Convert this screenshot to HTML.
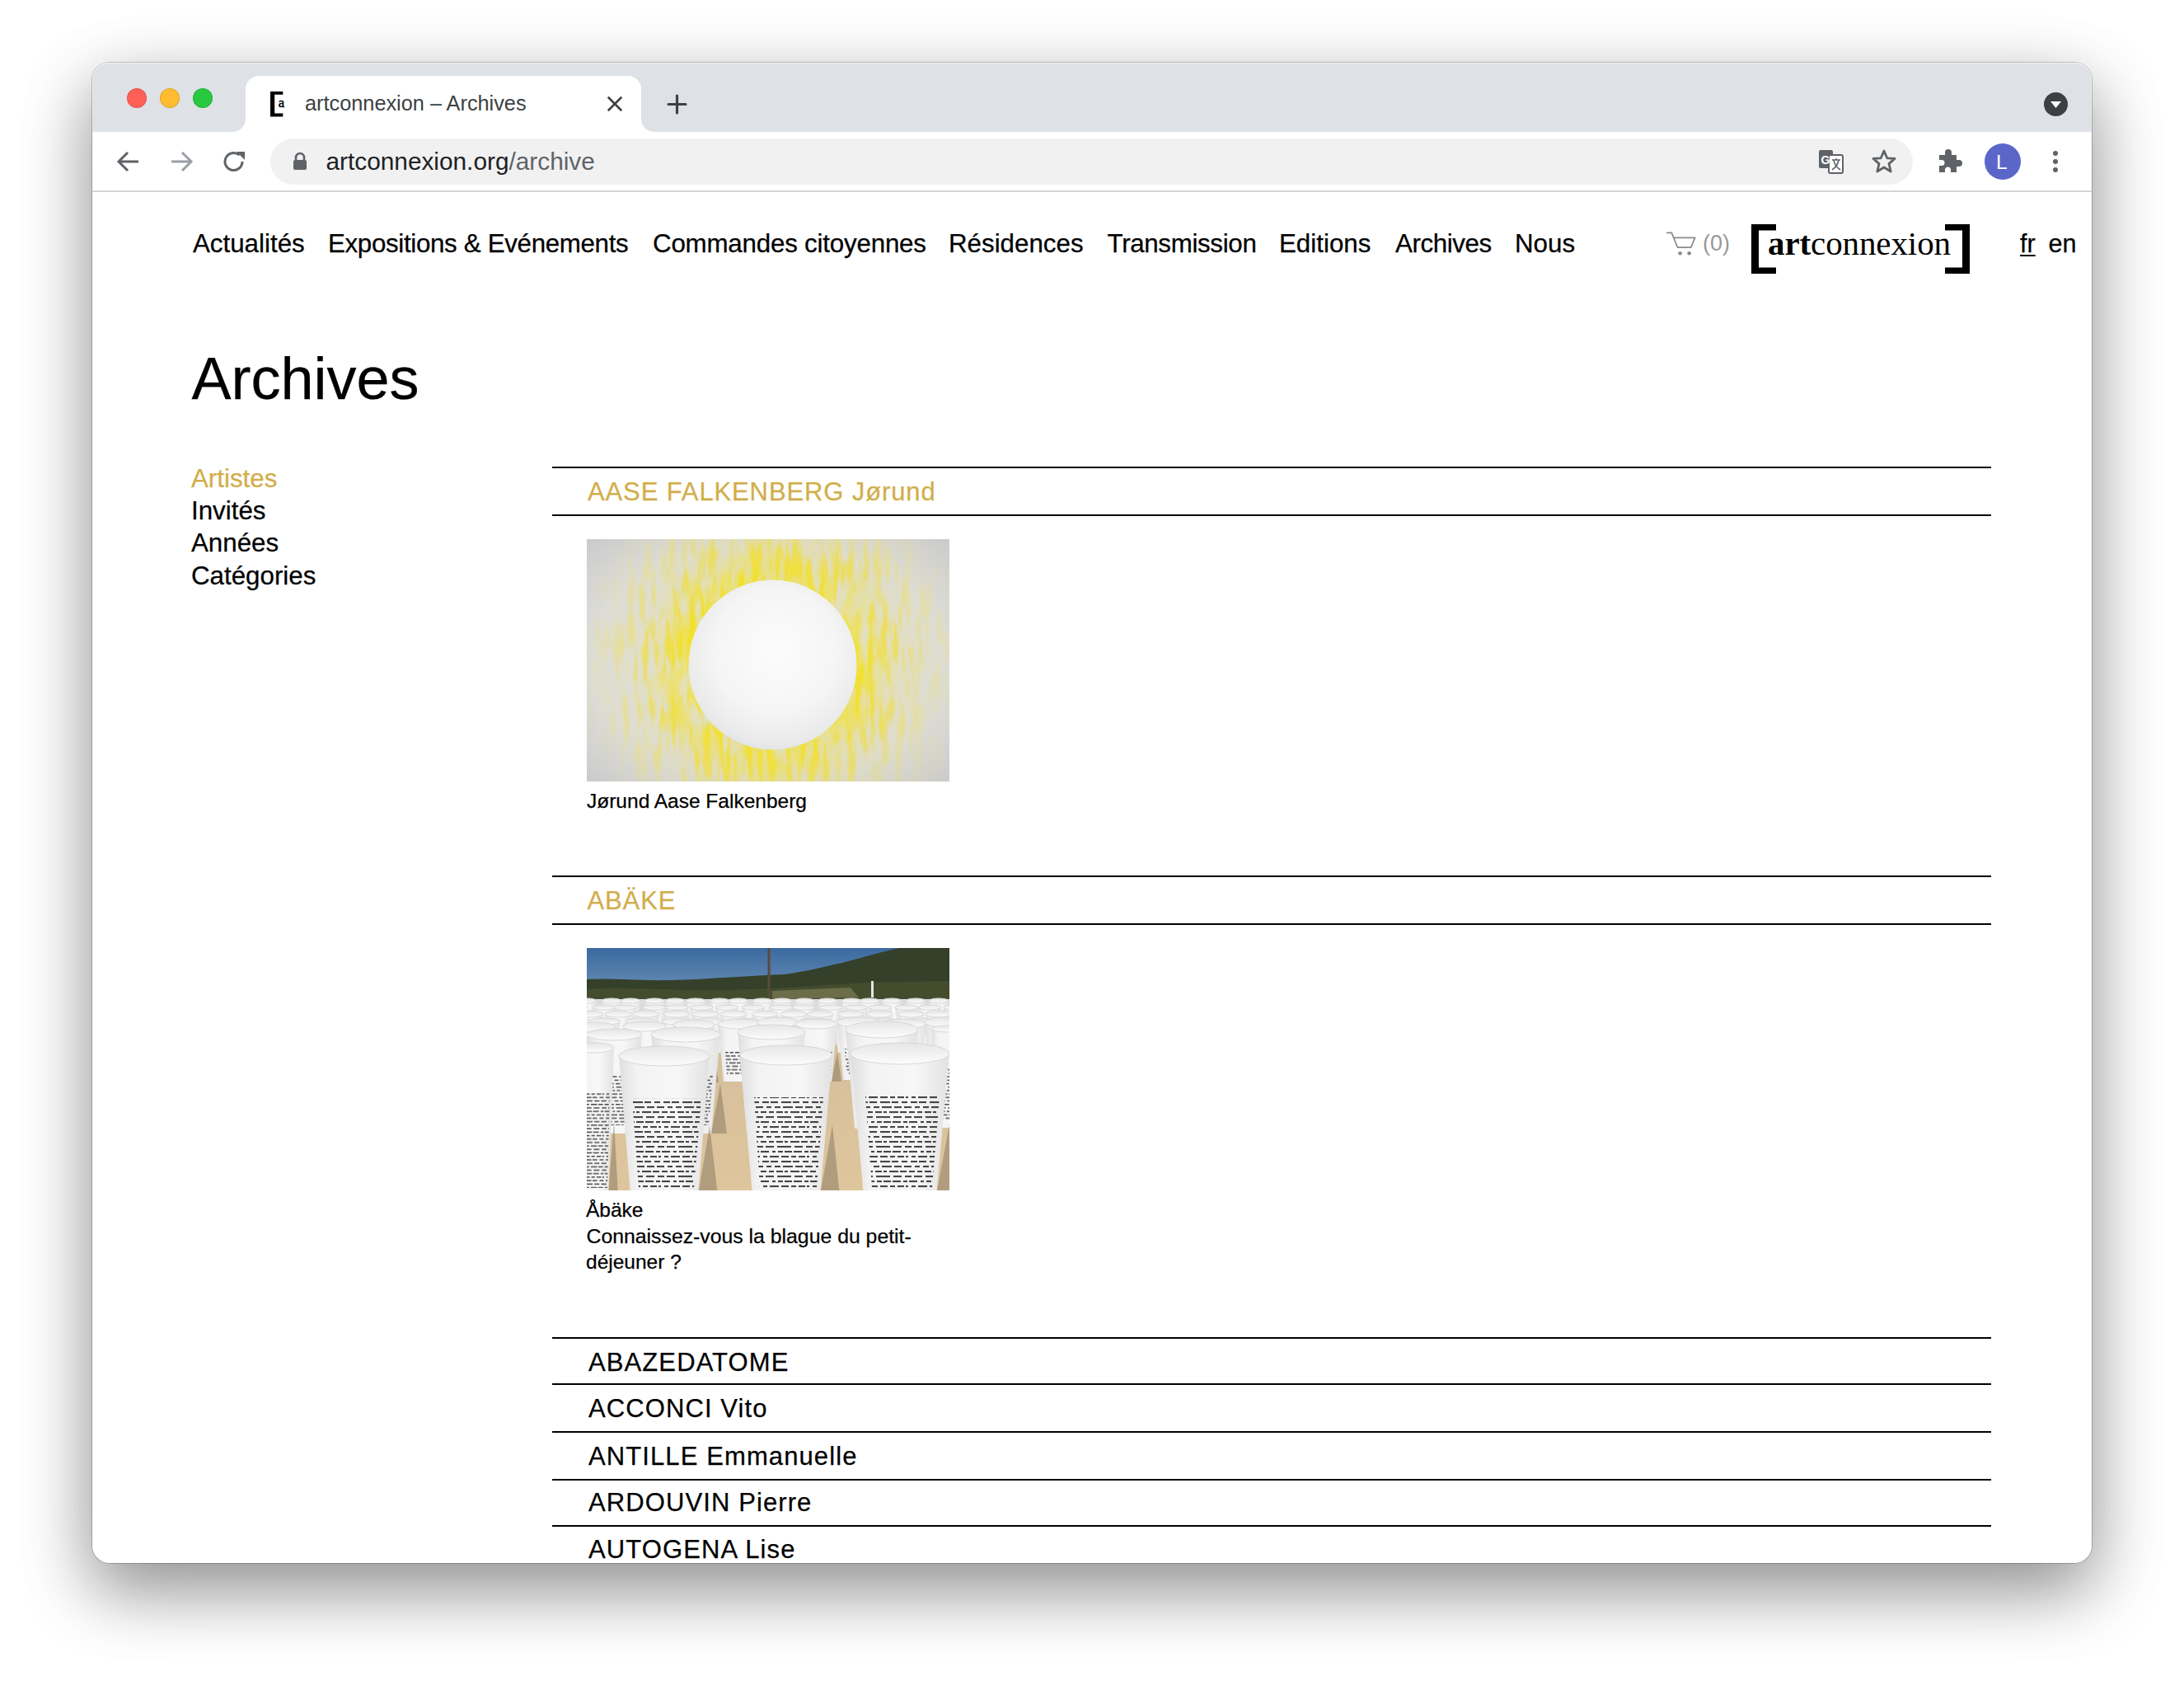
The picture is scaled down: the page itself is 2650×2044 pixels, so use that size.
<!DOCTYPE html>
<html><head><meta charset="utf-8">
<style>
html,body{margin:0;padding:0;background:#fff;}
body{width:2650px;height:2044px;position:relative;overflow:hidden;font-family:"Liberation Sans",sans-serif;}
#win{position:absolute;left:112px;top:76px;width:2426px;height:1820px;border-radius:21px;background:#fff;
 box-shadow:0 0 0 1px rgba(0,0,0,0.2), 0 32px 80px 0px rgba(0,0,0,0.35), 0 30px 100px 0px rgba(0,0,0,0.14);}
#clip{position:absolute;left:112px;top:76px;width:2426px;height:1820px;border-radius:21px;overflow:hidden;}
#strip{position:absolute;left:0;top:0;width:2426px;height:84px;background:#dee1e6;}
.dot{position:absolute;width:24px;height:24px;border-radius:50%;}
.t{position:absolute;white-space:nowrap;line-height:1;-webkit-text-stroke:0.25px currentColor;}
.hl{position:absolute;left:670px;width:1746px;height:2px;background:#000;}
.cap{font-size:24.5px;color:#000;}
.list{font-size:31px;letter-spacing:1.1px;color:#000;}
.nav{font-size:31.3px;color:#000;}
.gold{color:#d1ae4a !important;}
</style></head><body>
<div id="win"></div>
<div id="clip">
  <div id="strip"></div>
</div>
<!-- traffic lights -->
<div class="dot" style="left:154px;top:107px;background:#fe5f57;box-shadow:inset 0 0 0 1px rgba(0,0,0,0.12)"></div>
<div class="dot" style="left:194px;top:107px;background:#febc2e;box-shadow:inset 0 0 0 1px rgba(0,0,0,0.12)"></div>
<div class="dot" style="left:234px;top:107px;background:#28c840;box-shadow:inset 0 0 0 1px rgba(0,0,0,0.12)"></div>
<!-- tab -->
<div style="position:absolute;left:298px;top:92px;width:480px;height:70px;background:#fff;border-radius:16px 16px 0 0;"></div>
<div style="position:absolute;left:282px;top:144px;width:16px;height:16px;background:radial-gradient(circle at 0 0, #dee1e6 15.5px, #fff 16.5px);"></div>
<div style="position:absolute;left:778px;top:144px;width:16px;height:16px;background:radial-gradient(circle at 100% 0, #dee1e6 15.5px, #fff 16.5px);"></div>
<!-- favicon -->
<svg style="position:absolute;left:326px;top:109px" width="24" height="36" viewBox="0 0 24 36">
 <path d="M2 2 H17.3 V5.8 H7.2 V28.6 H17.3 V32.4 H2 Z" fill="#000"/>
 <text x="11.8" y="21.4" font-family="Liberation Serif" font-size="16.5" fill="#000" stroke="#000" stroke-width="0.5">a</text>
</svg>
<div class="t" style="left:370px;top:112.6px;font-size:25.3px;color:#3c4043;-webkit-text-stroke:0;">artconnexion – Archives</div>
<!-- close X -->
<svg style="position:absolute;left:734px;top:114px" width="24" height="24" viewBox="0 0 24 24"><path d="M4.5 4.5 L19.5 19.5 M19.5 4.5 L4.5 19.5" stroke="#3c4043" stroke-width="2.6" stroke-linecap="round"/></svg>
<!-- plus -->
<svg style="position:absolute;left:808px;top:113px" width="27" height="27" viewBox="0 0 27 27"><path d="M13.5 3 V24 M3 13.5 H24" stroke="#3c4043" stroke-width="3.2" stroke-linecap="round"/></svg>
<!-- dropdown circle -->
<div style="position:absolute;left:2480px;top:112px;width:29px;height:29px;border-radius:50%;background:#3c4043;"></div>
<svg style="position:absolute;left:2480px;top:112px" width="29" height="29" viewBox="0 0 29 29"><path d="M8 11 H21 L14.5 19 Z" fill="#fff"/></svg>
<!-- toolbar separator -->
<div style="position:absolute;left:112px;top:231px;width:2426px;height:2px;background:#d5d5d5;"></div>
<!-- nav icons -->
<svg style="position:absolute;left:140px;top:180px" width="32" height="32" viewBox="0 0 32 32"><path d="M28 16 H5 M15 5 L4 16 L15 27" stroke="#5f6368" stroke-width="3" fill="none"/></svg>
<svg style="position:absolute;left:204px;top:180px" width="32" height="32" viewBox="0 0 32 32"><path d="M4 16 H27 M17 5 L28 16 L17 27" stroke="#9aa0a6" stroke-width="3" fill="none"/></svg>
<svg style="position:absolute;left:268px;top:180px" width="32" height="32" viewBox="0 0 32 32"><path d="M26 16 A10.5 10.5 0 1 1 22.5 8.2" stroke="#5f6368" stroke-width="3" fill="none"/><path d="M19 4 L29 4 L29 14 Z" fill="#5f6368"/></svg>
<!-- omnibox -->
<div style="position:absolute;left:328px;top:168px;width:1993px;height:56px;border-radius:28px;background:#f1f1f1;"></div>
<svg style="position:absolute;left:354px;top:184px" width="20" height="24" viewBox="0 0 20 24"><path d="M5 10 V7 A5 5 0 0 1 15 7 V10" stroke="#5f6368" stroke-width="2.6" fill="none"/><rect x="2" y="10" width="16" height="12" rx="2" fill="#5f6368"/></svg>
<div class="t" style="left:395.5px;top:180.6px;font-size:29.8px;color:#202124;-webkit-text-stroke:0;">artconnexion.org<span style="color:#5f6368">/archive</span></div>
<!-- translate icon -->
<svg style="position:absolute;left:2206px;top:181px" width="32" height="32" viewBox="0 0 32 32"><rect x="1" y="1" width="17" height="22" rx="2" fill="#5f6368"/><rect x="13" y="7" width="17" height="22" rx="2" fill="#fff" stroke="#5f6368" stroke-width="2"/><text x="3.5" y="18" font-family="Liberation Sans" font-weight="bold" font-size="14" fill="#fff">G</text><path d="M17 13 H27 M22 11 V13 M19 13 C20 20 24 23 27 25 M25 13 C24 19 20 23 17 25" stroke="#5f6368" stroke-width="1.6" fill="none"/></svg>
<!-- star -->
<svg style="position:absolute;left:2270px;top:180px" width="32" height="32" viewBox="0 0 32 32"><path d="M16 3 L19.8 11.8 L29 12.4 L22 18.6 L24.2 28 L16 23 L7.8 28 L10 18.6 L3 12.4 L12.2 11.8 Z" stroke="#5f6368" stroke-width="2.8" fill="none" stroke-linejoin="round"/></svg>
<!-- puzzle -->
<svg style="position:absolute;left:2351px;top:180px" width="32" height="32" viewBox="0 0 32 32"><path d="M2 8 H9 V5 A4 4 0 0 1 17 5 V8 H23 V14 H26 A4 4 0 0 1 26 22 H23 V29 H16 V26 A3.5 3.5 0 0 0 9 26 V29 H2 V21 H5 A3.5 3.5 0 0 0 5 14 H2 Z" fill="#5f6368"/></svg>
<!-- avatar -->
<div style="position:absolute;left:2408px;top:174px;width:44px;height:44px;border-radius:50%;background:#5a67c9;"></div>
<div class="t" style="left:2422px;top:184.5px;font-size:24.5px;color:#fff;-webkit-text-stroke:0;">L</div>
<!-- kebab -->
<div style="position:absolute;left:2491px;top:183px;width:6px;height:6px;border-radius:50%;background:#5f6368;"></div>
<div style="position:absolute;left:2491px;top:193px;width:6px;height:6px;border-radius:50%;background:#5f6368;"></div>
<div style="position:absolute;left:2491px;top:203px;width:6px;height:6px;border-radius:50%;background:#5f6368;"></div>

<!-- PAGE CONTENT -->

<!-- site nav -->
<div class="t nav" style="left:234px;top:280px;">Actualités</div>
<div class="t nav" style="left:398px;top:280px;letter-spacing:-0.33px;">Expositions &amp; Evénements</div>
<div class="t nav" style="left:792px;top:280px;letter-spacing:-0.2px;">Commandes citoyennes</div>
<div class="t nav" style="left:1151px;top:280px;">Résidences</div>
<div class="t nav" style="left:1343.5px;top:280px;letter-spacing:-0.33px;">Transmission</div>
<div class="t nav" style="left:1552px;top:280px;">Editions</div>
<div class="t nav" style="left:1693px;top:280px;letter-spacing:-0.4px;">Archives</div>
<div class="t nav" style="left:1838px;top:280px;">Nous</div>
<!-- cart -->
<svg style="position:absolute;left:2021px;top:279px" width="40" height="34" viewBox="0 0 40 34"><path d="M1.8 3.4 H7.3 L14.6 21.2 H30.7 L35.7 9.3 H10.5" stroke="#8a8a8a" stroke-width="1.7" fill="none" stroke-linejoin="round" stroke-linecap="round"/><circle cx="17.6" cy="28.3" r="2.3" fill="#8a8a8a"/><circle cx="28.6" cy="28.3" r="2.3" fill="#8a8a8a"/></svg>
<div class="t" style="left:2066px;top:282px;font-size:27px;color:#999;-webkit-text-stroke:0;">(0)</div>
<!-- logo -->
<svg style="position:absolute;left:2124px;top:271px" width="268" height="62" viewBox="0 0 268 62"><path d="M1 1 H31 V8.5 H10 V53.5 H31 V61 H1 Z" fill="#000"/><path d="M266 1 H236 V8.5 H257 V53.5 H236 V61 H266 Z" fill="#000"/></svg>
<div class="t" style="left:2145px;top:275px;font-family:'Liberation Serif';font-size:41px;color:#000;letter-spacing:-0.1px;-webkit-text-stroke:0;"><b>art</b>connexion</div>
<div class="t" style="left:2451px;top:280.1px;font-size:30.5px;color:#000;text-decoration:underline;text-underline-offset:2.5px;text-decoration-thickness:2px;">fr</div>
<div class="t" style="left:2485.5px;top:280.1px;font-size:30.5px;color:#000;">en</div>
<!-- title -->
<div class="t" style="left:232.5px;top:423px;font-size:72px;color:#000;">Archives</div>
<!-- sidebar -->
<div class="t nav gold" style="left:232px;top:564.5px;">Artistes</div>
<div class="t nav" style="left:232px;top:604.1px;">Invités</div>
<div class="t nav" style="left:232px;top:642.5px;">Années</div>
<div class="t nav" style="left:232px;top:682.5px;">Catégories</div>
<!-- section 1 -->
<div class="hl" style="top:566px"></div>
<div class="t list gold" style="left:713px;top:580.8px;letter-spacing:0.88px;">AASE FALKENBERG Jørund</div>
<div class="hl" style="top:624px"></div>
<div id="img1" style="position:absolute;left:712px;top:654px;width:440px;height:294px;overflow:hidden;"><svg width="440" height="294" viewBox="0 0 440 294" style="display:block">
<defs>
 <radialGradient id="bg1" cx="0.5" cy="0.5" r="0.7">
  <stop offset="0" stop-color="#e6e6e6"/><stop offset="0.7" stop-color="#dcdcdb"/><stop offset="1" stop-color="#cbcbcb"/>
 </radialGradient>
 <radialGradient id="halo" cx="225.5" cy="152.6" r="250" gradientUnits="userSpaceOnUse">
  <stop offset="0.38" stop-color="#f2e02a" stop-opacity="1"/>
  <stop offset="0.6" stop-color="#efdd40" stop-opacity="0.7"/>
  <stop offset="0.85" stop-color="#ece070" stop-opacity="0.22"/>
  <stop offset="1" stop-color="#e8dc80" stop-opacity="0"/>
 </radialGradient>
 <filter id="streak" x="0" y="0" width="100%" height="100%">
  <feTurbulence type="fractalNoise" baseFrequency="0.12 0.02" numOctaves="3" seed="11" result="n"/>
  <feColorMatrix in="n" type="matrix" values="0 0 0 0 0  0 0 0 0 0  0 0 0 0 0  0 0 0 4 -1.75" result="a"/>
  <feComposite in="SourceGraphic" in2="a" operator="in"/>
 </filter>
 <radialGradient id="halo2" cx="225.5" cy="152.6" r="160" gradientUnits="userSpaceOnUse">
  <stop offset="0.6" stop-color="#f4e31c" stop-opacity="1"/>
  <stop offset="0.8" stop-color="#f2e030" stop-opacity="0.7"/>
  <stop offset="1" stop-color="#f0e040" stop-opacity="0"/>
 </radialGradient>
 <filter id="streak2" x="0" y="0" width="100%" height="100%">
  <feTurbulence type="fractalNoise" baseFrequency="0.06 0.03" numOctaves="2" seed="5" result="n"/>
  <feColorMatrix in="n" type="matrix" values="0 0 0 0 0  0 0 0 0 0  0 0 0 0 0  0 0 0 3 -0.9" result="a"/>
  <feComposite in="SourceGraphic" in2="a" operator="in"/>
 </filter>
 <radialGradient id="ball" cx="0.52" cy="0.42" r="0.6">
  <stop offset="0" stop-color="#fcfcfc"/><stop offset="0.6" stop-color="#f5f5f5"/><stop offset="0.9" stop-color="#eaeaeb"/><stop offset="1" stop-color="#e2e2e3"/>
 </radialGradient>
</defs>
<rect width="440" height="294" fill="url(#bg1)"/>
<rect width="440" height="294" fill="url(#halo)" opacity="0.22"/>
<rect width="440" height="294" fill="url(#halo)" filter="url(#streak)"/>
<rect width="440" height="294" fill="url(#halo2)" filter="url(#streak2)" opacity="0.6"/>
<ellipse cx="225.5" cy="152.6" rx="102" ry="103" fill="url(#ball)"/>
</svg></div>
<div class="t cap" style="left:712px;top:959.9px;">Jørund Aase Falkenberg</div>
<!-- section 2 -->
<div class="hl" style="top:1062px"></div>
<div class="t list gold" style="left:712.5px;top:1076.5px;letter-spacing:0.88px;">ABÄKE</div>
<div class="hl" style="top:1120px"></div>
<div id="img2" style="position:absolute;left:712px;top:1150px;width:440px;height:294px;overflow:hidden;"><svg width="440" height="294" viewBox="0 0 440 294" style="display:block">
<defs>
 <linearGradient id="sky" x1="0" x2="0" y1="0" y2="1"><stop offset="0" stop-color="#3b6aa0"/><stop offset="1" stop-color="#7194b8"/></linearGradient>
 <linearGradient id="ground" x1="0" x2="0" y1="0" y2="1"><stop offset="0" stop-color="#cdbb9c"/><stop offset="1" stop-color="#dfc59c"/></linearGradient>
 <linearGradient id="cb" x1="0" x2="1" y1="0" y2="0"><stop offset="0" stop-color="#dedede"/><stop offset="0.2" stop-color="#f3f3f3"/><stop offset="0.65" stop-color="#f7f7f7"/><stop offset="1" stop-color="#e2e2e2"/></linearGradient>
 <linearGradient id="ci" x1="0" x2="0" y1="0" y2="1"><stop offset="0" stop-color="#e6e6e6"/><stop offset="1" stop-color="#fcfcfc"/></linearGradient>
 <pattern id="tx" width="60" height="36" patternUnits="userSpaceOnUse"><g fill="#1a1a1a"><rect x="0" y="0" width="5" height="2.1"/><rect x="8" y="0" width="6" height="2.1"/><rect x="17" y="0" width="8" height="2.1"/><rect x="27" y="0" width="3" height="2.1"/><rect x="34" y="0" width="5" height="2.1"/><rect x="42" y="0" width="11" height="2.1"/><rect x="56" y="0" width="4" height="2.1"/><rect x="0" y="6" width="8" height="2.1"/><rect x="10" y="6" width="8" height="2.1"/><rect x="22" y="6" width="7" height="2.1"/><rect x="33" y="6" width="8" height="2.1"/><rect x="43" y="6" width="9" height="2.1"/><rect x="56" y="6" width="4" height="2.1"/><rect x="0" y="12" width="10" height="2.1"/><rect x="13" y="12" width="9" height="2.1"/><rect x="25" y="12" width="9" height="2.1"/><rect x="38" y="12" width="6" height="2.1"/><rect x="48" y="12" width="7" height="2.1"/><rect x="58" y="12" width="2" height="2.1"/><rect x="0" y="18" width="4" height="2.1"/><rect x="7" y="18" width="11" height="2.1"/><rect x="20" y="18" width="8" height="2.1"/><rect x="31" y="18" width="7" height="2.1"/><rect x="41" y="18" width="6" height="2.1"/><rect x="50" y="18" width="8" height="2.1"/><rect x="0" y="24" width="8" height="2.1"/><rect x="12" y="24" width="10" height="2.1"/><rect x="26" y="24" width="8" height="2.1"/><rect x="37" y="24" width="10" height="2.1"/><rect x="51" y="24" width="9" height="2.1"/><rect x="0" y="30" width="9" height="2.1"/><rect x="11" y="30" width="10" height="2.1"/><rect x="24" y="30" width="5" height="2.1"/><rect x="31" y="30" width="10" height="2.1"/><rect x="45" y="30" width="4" height="2.1"/><rect x="52" y="30" width="6" height="2.1"/></g></pattern>
 <pattern id="txs" width="60" height="36" patternUnits="userSpaceOnUse" patternTransform="scale(0.7)"><g fill="#1a1a1a"><rect x="0" y="0" width="5" height="2.1"/><rect x="8" y="0" width="6" height="2.1"/><rect x="17" y="0" width="8" height="2.1"/><rect x="27" y="0" width="3" height="2.1"/><rect x="34" y="0" width="5" height="2.1"/><rect x="42" y="0" width="11" height="2.1"/><rect x="56" y="0" width="4" height="2.1"/><rect x="0" y="6" width="8" height="2.1"/><rect x="10" y="6" width="8" height="2.1"/><rect x="22" y="6" width="7" height="2.1"/><rect x="33" y="6" width="8" height="2.1"/><rect x="43" y="6" width="9" height="2.1"/><rect x="56" y="6" width="4" height="2.1"/><rect x="0" y="12" width="10" height="2.1"/><rect x="13" y="12" width="9" height="2.1"/><rect x="25" y="12" width="9" height="2.1"/><rect x="38" y="12" width="6" height="2.1"/><rect x="48" y="12" width="7" height="2.1"/><rect x="58" y="12" width="2" height="2.1"/><rect x="0" y="18" width="4" height="2.1"/><rect x="7" y="18" width="11" height="2.1"/><rect x="20" y="18" width="8" height="2.1"/><rect x="31" y="18" width="7" height="2.1"/><rect x="41" y="18" width="6" height="2.1"/><rect x="50" y="18" width="8" height="2.1"/><rect x="0" y="24" width="8" height="2.1"/><rect x="12" y="24" width="10" height="2.1"/><rect x="26" y="24" width="8" height="2.1"/><rect x="37" y="24" width="10" height="2.1"/><rect x="51" y="24" width="9" height="2.1"/><rect x="0" y="30" width="9" height="2.1"/><rect x="11" y="30" width="10" height="2.1"/><rect x="24" y="30" width="5" height="2.1"/><rect x="31" y="30" width="10" height="2.1"/><rect x="45" y="30" width="4" height="2.1"/><rect x="52" y="30" width="6" height="2.1"/></g></pattern>
</defs>
<rect width="440" height="294" fill="url(#ground)"/>
<rect width="440" height="64" fill="url(#sky)"/>
<path d="M0 38 C30 36 60 40 100 39 C150 38 200 33 240 32 C270 28 290 22 310 18 C340 10 360 4 380 0 L440 0 L440 70 L0 70 Z" fill="#34402a"/>
<path d="M0 50 C60 46 120 54 200 50 C260 48 300 44 340 42 L440 40 L440 72 L0 72 Z" fill="#46502f" opacity="0.85"/>
<path d="M225 52 L320 48 L330 60 L225 62 Z" fill="#7d7a55" opacity="0.7"/>
<rect x="219.5" y="0" width="3" height="64" fill="#5c4a3a"/>
<rect x="345" y="40" width="3" height="20" fill="#e6e6e6"/>
<rect x="0" y="62" width="440" height="55" fill="#dcdcdc"/>

<path d="M-37 64 L-13 64 L-16 90 L-34 90 Z" fill="url(#cb)"/>
<ellipse cx="-25" cy="64" rx="12" ry="3" fill="url(#ci)" stroke="#d8d8d8"/>
<path d="M-12 64 L12 64 L9 90 L-9 90 Z" fill="url(#cb)"/>
<ellipse cx="0" cy="64" rx="12" ry="3" fill="url(#ci)" stroke="#d8d8d8"/>
<path d="M18 64 L42 64 L39 90 L21 90 Z" fill="url(#cb)"/>
<ellipse cx="30" cy="64" rx="12" ry="3" fill="url(#ci)" stroke="#d8d8d8"/>
<path d="M41 64 L65 64 L62 90 L44 90 Z" fill="url(#cb)"/>
<ellipse cx="53" cy="64" rx="12" ry="3" fill="url(#ci)" stroke="#d8d8d8"/>
<path d="M70 64 L94 64 L91 90 L73 90 Z" fill="url(#cb)"/>
<ellipse cx="82" cy="64" rx="12" ry="3" fill="url(#ci)" stroke="#d8d8d8"/>
<path d="M95 64 L119 64 L116 90 L98 90 Z" fill="url(#cb)"/>
<ellipse cx="107" cy="64" rx="12" ry="3" fill="url(#ci)" stroke="#d8d8d8"/>
<path d="M120 64 L144 64 L141 90 L123 90 Z" fill="url(#cb)"/>
<ellipse cx="132" cy="64" rx="12" ry="3" fill="url(#ci)" stroke="#d8d8d8"/>
<path d="M149 64 L173 64 L170 90 L152 90 Z" fill="url(#cb)"/>
<ellipse cx="161" cy="64" rx="12" ry="3" fill="url(#ci)" stroke="#d8d8d8"/>
<path d="M172 64 L196 64 L193 90 L176 90 Z" fill="url(#cb)"/>
<ellipse cx="184" cy="64" rx="12" ry="3" fill="url(#ci)" stroke="#d8d8d8"/>
<path d="M201 64 L225 64 L222 90 L204 90 Z" fill="url(#cb)"/>
<ellipse cx="213" cy="64" rx="12" ry="3" fill="url(#ci)" stroke="#d8d8d8"/>
<path d="M225 64 L249 64 L246 90 L229 90 Z" fill="url(#cb)"/>
<ellipse cx="237" cy="64" rx="12" ry="3" fill="url(#ci)" stroke="#d8d8d8"/>
<path d="M252 64 L276 64 L273 90 L255 90 Z" fill="url(#cb)"/>
<ellipse cx="264" cy="64" rx="12" ry="3" fill="url(#ci)" stroke="#d8d8d8"/>
<path d="M280 64 L304 64 L301 90 L283 90 Z" fill="url(#cb)"/>
<ellipse cx="292" cy="64" rx="12" ry="3" fill="url(#ci)" stroke="#d8d8d8"/>
<path d="M309 64 L333 64 L330 90 L312 90 Z" fill="url(#cb)"/>
<ellipse cx="321" cy="64" rx="12" ry="3" fill="url(#ci)" stroke="#d8d8d8"/>
<path d="M331 64 L355 64 L352 90 L334 90 Z" fill="url(#cb)"/>
<ellipse cx="343" cy="64" rx="12" ry="3" fill="url(#ci)" stroke="#d8d8d8"/>
<path d="M358 64 L382 64 L379 90 L361 90 Z" fill="url(#cb)"/>
<ellipse cx="370" cy="64" rx="12" ry="3" fill="url(#ci)" stroke="#d8d8d8"/>
<path d="M387 64 L411 64 L408 90 L390 90 Z" fill="url(#cb)"/>
<ellipse cx="399" cy="64" rx="12" ry="3" fill="url(#ci)" stroke="#d8d8d8"/>
<path d="M415 64 L439 64 L436 90 L419 90 Z" fill="url(#cb)"/>
<ellipse cx="427" cy="64" rx="12" ry="3" fill="url(#ci)" stroke="#d8d8d8"/>
<path d="M440 64 L464 64 L461 90 L443 90 Z" fill="url(#cb)"/>
<ellipse cx="452" cy="64" rx="12" ry="3" fill="url(#ci)" stroke="#d8d8d8"/>
<path d="M-27 72 L1 72 L-3 101 L-24 101 Z" fill="url(#cb)"/>
<ellipse cx="-13" cy="72" rx="14" ry="3" fill="url(#ci)" stroke="#d8d8d8"/>
<path d="M7 72 L35 72 L31 101 L11 101 Z" fill="url(#cb)"/>
<ellipse cx="21" cy="72" rx="14" ry="3" fill="url(#ci)" stroke="#d8d8d8"/>
<path d="M32 72 L60 72 L57 101 L36 101 Z" fill="url(#cb)"/>
<ellipse cx="46" cy="72" rx="14" ry="3" fill="url(#ci)" stroke="#d8d8d8"/>
<path d="M68 72 L96 72 L92 101 L72 101 Z" fill="url(#cb)"/>
<ellipse cx="82" cy="72" rx="14" ry="3" fill="url(#ci)" stroke="#d8d8d8"/>
<path d="M95 72 L123 72 L120 101 L99 101 Z" fill="url(#cb)"/>
<ellipse cx="109" cy="72" rx="14" ry="3" fill="url(#ci)" stroke="#d8d8d8"/>
<path d="M125 72 L153 72 L150 101 L129 101 Z" fill="url(#cb)"/>
<ellipse cx="139" cy="72" rx="14" ry="3" fill="url(#ci)" stroke="#d8d8d8"/>
<path d="M156 72 L184 72 L180 101 L160 101 Z" fill="url(#cb)"/>
<ellipse cx="170" cy="72" rx="14" ry="3" fill="url(#ci)" stroke="#d8d8d8"/>
<path d="M188 72 L216 72 L212 101 L191 101 Z" fill="url(#cb)"/>
<ellipse cx="202" cy="72" rx="14" ry="3" fill="url(#ci)" stroke="#d8d8d8"/>
<path d="M222 72 L250 72 L246 101 L225 101 Z" fill="url(#cb)"/>
<ellipse cx="236" cy="72" rx="14" ry="3" fill="url(#ci)" stroke="#d8d8d8"/>
<path d="M249 72 L277 72 L273 101 L252 101 Z" fill="url(#cb)"/>
<ellipse cx="263" cy="72" rx="14" ry="3" fill="url(#ci)" stroke="#d8d8d8"/>
<path d="M282 72 L310 72 L306 101 L286 101 Z" fill="url(#cb)"/>
<ellipse cx="296" cy="72" rx="14" ry="3" fill="url(#ci)" stroke="#d8d8d8"/>
<path d="M313 72 L341 72 L337 101 L317 101 Z" fill="url(#cb)"/>
<ellipse cx="327" cy="72" rx="14" ry="3" fill="url(#ci)" stroke="#d8d8d8"/>
<path d="M342 72 L370 72 L367 101 L346 101 Z" fill="url(#cb)"/>
<ellipse cx="356" cy="72" rx="14" ry="3" fill="url(#ci)" stroke="#d8d8d8"/>
<path d="M374 72 L402 72 L398 101 L378 101 Z" fill="url(#cb)"/>
<ellipse cx="388" cy="72" rx="14" ry="3" fill="url(#ci)" stroke="#d8d8d8"/>
<path d="M402 72 L430 72 L426 101 L406 101 Z" fill="url(#cb)"/>
<ellipse cx="416" cy="72" rx="14" ry="3" fill="url(#ci)" stroke="#d8d8d8"/>
<path d="M433 72 L461 72 L457 101 L436 101 Z" fill="url(#cb)"/>
<ellipse cx="447" cy="72" rx="14" ry="3" fill="url(#ci)" stroke="#d8d8d8"/>
<path d="M-50 80 L-18 80 L-22 112 L-46 112 Z" fill="url(#cb)"/>
<ellipse cx="-34" cy="80" rx="16" ry="4" fill="url(#ci)" stroke="#d8d8d8"/>
<path d="M-12 80 L20 80 L16 112 L-8 112 Z" fill="url(#cb)"/>
<ellipse cx="4" cy="80" rx="16" ry="4" fill="url(#ci)" stroke="#d8d8d8"/>
<path d="M22 80 L54 80 L50 112 L26 112 Z" fill="url(#cb)"/>
<ellipse cx="38" cy="80" rx="16" ry="4" fill="url(#ci)" stroke="#d8d8d8"/>
<path d="M56 80 L88 80 L84 112 L61 112 Z" fill="url(#cb)"/>
<ellipse cx="72" cy="80" rx="16" ry="4" fill="url(#ci)" stroke="#d8d8d8"/>
<path d="M93 80 L125 80 L121 112 L97 112 Z" fill="url(#cb)"/>
<ellipse cx="109" cy="80" rx="16" ry="4" fill="url(#ci)" stroke="#d8d8d8"/>
<path d="M128 80 L160 80 L156 112 L132 112 Z" fill="url(#cb)"/>
<ellipse cx="144" cy="80" rx="16" ry="4" fill="url(#ci)" stroke="#d8d8d8"/>
<path d="M162 80 L194 80 L190 112 L166 112 Z" fill="url(#cb)"/>
<ellipse cx="178" cy="80" rx="16" ry="4" fill="url(#ci)" stroke="#d8d8d8"/>
<path d="M200 80 L232 80 L228 112 L204 112 Z" fill="url(#cb)"/>
<ellipse cx="216" cy="80" rx="16" ry="4" fill="url(#ci)" stroke="#d8d8d8"/>
<path d="M235 80 L267 80 L263 112 L239 112 Z" fill="url(#cb)"/>
<ellipse cx="251" cy="80" rx="16" ry="4" fill="url(#ci)" stroke="#d8d8d8"/>
<path d="M267 80 L299 80 L295 112 L271 112 Z" fill="url(#cb)"/>
<ellipse cx="283" cy="80" rx="16" ry="4" fill="url(#ci)" stroke="#d8d8d8"/>
<path d="M304 80 L336 80 L332 112 L309 112 Z" fill="url(#cb)"/>
<ellipse cx="320" cy="80" rx="16" ry="4" fill="url(#ci)" stroke="#d8d8d8"/>
<path d="M339 80 L371 80 L367 112 L344 112 Z" fill="url(#cb)"/>
<ellipse cx="355" cy="80" rx="16" ry="4" fill="url(#ci)" stroke="#d8d8d8"/>
<path d="M377 80 L409 80 L404 112 L381 112 Z" fill="url(#cb)"/>
<ellipse cx="393" cy="80" rx="16" ry="4" fill="url(#ci)" stroke="#d8d8d8"/>
<path d="M411 80 L443 80 L439 112 L415 112 Z" fill="url(#cb)"/>
<ellipse cx="427" cy="80" rx="16" ry="4" fill="url(#ci)" stroke="#d8d8d8"/>
<path d="M444 80 L476 80 L471 112 L448 112 Z" fill="url(#cb)"/>
<ellipse cx="460" cy="80" rx="16" ry="4" fill="url(#ci)" stroke="#d8d8d8"/>
<path d="M-33 89 L5 89 L-0 127 L-28 127 Z" fill="url(#cb)"/>
<ellipse cx="-14" cy="89" rx="19" ry="4" fill="url(#ci)" stroke="#d8d8d8"/>
<path d="M3 89 L41 89 L36 127 L8 127 Z" fill="url(#cb)"/>
<ellipse cx="22" cy="89" rx="19" ry="4" fill="url(#ci)" stroke="#d8d8d8"/>
<path d="M47 89 L85 89 L80 127 L52 127 Z" fill="url(#cb)"/>
<ellipse cx="66" cy="89" rx="19" ry="4" fill="url(#ci)" stroke="#d8d8d8"/>
<path d="M91 89 L129 89 L124 127 L96 127 Z" fill="url(#cb)"/>
<ellipse cx="110" cy="89" rx="19" ry="4" fill="url(#ci)" stroke="#d8d8d8"/>
<path d="M129 89 L167 89 L162 127 L134 127 Z" fill="url(#cb)"/>
<ellipse cx="148" cy="89" rx="19" ry="4" fill="url(#ci)" stroke="#d8d8d8"/>
<path d="M173 89 L211 89 L206 127 L178 127 Z" fill="url(#cb)"/>
<ellipse cx="192" cy="89" rx="19" ry="4" fill="url(#ci)" stroke="#d8d8d8"/>
<path d="M212 89 L250 89 L245 127 L217 127 Z" fill="url(#cb)"/>
<ellipse cx="231" cy="89" rx="19" ry="4" fill="url(#ci)" stroke="#d8d8d8"/>
<path d="M258 89 L296 89 L291 127 L262 127 Z" fill="url(#cb)"/>
<ellipse cx="277" cy="89" rx="19" ry="4" fill="url(#ci)" stroke="#d8d8d8"/>
<path d="M300 89 L338 89 L333 127 L305 127 Z" fill="url(#cb)"/>
<ellipse cx="319" cy="89" rx="19" ry="4" fill="url(#ci)" stroke="#d8d8d8"/>
<path d="M341 89 L379 89 L374 127 L345 127 Z" fill="url(#cb)"/>
<ellipse cx="360" cy="89" rx="19" ry="4" fill="url(#ci)" stroke="#d8d8d8"/>
<path d="M384 89 L422 89 L417 127 L389 127 Z" fill="url(#cb)"/>
<ellipse cx="403" cy="89" rx="19" ry="4" fill="url(#ci)" stroke="#d8d8d8"/>
<path d="M423 89 L461 89 L456 127 L428 127 Z" fill="url(#cb)"/>
<ellipse cx="442" cy="89" rx="19" ry="4" fill="url(#ci)" stroke="#d8d8d8"/>
<path d="M28 166 L40 166 L35 131 Z" fill="#7a6d5c" opacity="0.45"/>
<path d="M-15 96 L35 96 L28 166 L-8 166 Z" fill="url(#cb)"/>
<path d="M-7 128 L29 128 L27 159 L-5 159 Z" fill="url(#txs)" opacity="0.8"/>
<ellipse cx="10" cy="96" rx="25" ry="6" fill="url(#ci)" stroke="#d8d8d8"/>
<path d="M89 165 L101 165 L96 130 Z" fill="#7a6d5c" opacity="0.45"/>
<path d="M44 95 L96 95 L89 165 L51 165 Z" fill="url(#cb)"/>
<path d="M53 126 L90 126 L88 158 L55 158 Z" fill="url(#txs)" opacity="0.8"/>
<ellipse cx="70" cy="95" rx="26" ry="6" fill="url(#ci)" stroke="#d8d8d8"/>
<path d="M148 163 L160 163 L155 128 Z" fill="#7a6d5c" opacity="0.45"/>
<path d="M105 93 L155 93 L148 163 L112 163 Z" fill="url(#cb)"/>
<path d="M113 124 L149 124 L147 156 L115 156 Z" fill="url(#txs)" opacity="0.8"/>
<ellipse cx="130" cy="93" rx="25" ry="6" fill="url(#ci)" stroke="#d8d8d8"/>
<path d="M204 162 L216 162 L211 127 Z" fill="#7a6d5c" opacity="0.45"/>
<path d="M159 92 L211 92 L204 162 L166 162 Z" fill="url(#cb)"/>
<path d="M168 124 L205 124 L203 155 L170 155 Z" fill="url(#txs)" opacity="0.8"/>
<ellipse cx="185" cy="92" rx="26" ry="6" fill="url(#ci)" stroke="#d8d8d8"/>
<path d="M250 160 L262 160 L257 125 Z" fill="#7a6d5c" opacity="0.45"/>
<path d="M207 90 L257 90 L250 160 L214 160 Z" fill="url(#cb)"/>
<path d="M215 122 L251 122 L249 153 L217 153 Z" fill="url(#txs)" opacity="0.8"/>
<ellipse cx="232" cy="90" rx="25" ry="6" fill="url(#ci)" stroke="#d8d8d8"/>
<path d="M297 162 L309 162 L304 127 Z" fill="#7a6d5c" opacity="0.45"/>
<path d="M252 92 L304 92 L297 162 L259 162 Z" fill="url(#cb)"/>
<path d="M261 124 L298 124 L296 155 L263 155 Z" fill="url(#txs)" opacity="0.8"/>
<ellipse cx="278" cy="92" rx="26" ry="6" fill="url(#ci)" stroke="#d8d8d8"/>
<path d="M349 160 L361 160 L356 125 Z" fill="#7a6d5c" opacity="0.45"/>
<path d="M304 90 L356 90 L349 160 L311 160 Z" fill="url(#cb)"/>
<path d="M313 122 L350 122 L348 153 L315 153 Z" fill="url(#txs)" opacity="0.8"/>
<ellipse cx="330" cy="90" rx="26" ry="6" fill="url(#ci)" stroke="#d8d8d8"/>
<path d="M405 162 L417 162 L412 127 Z" fill="#7a6d5c" opacity="0.45"/>
<path d="M358 92 L412 92 L405 162 L365 162 Z" fill="url(#cb)"/>
<path d="M367 124 L406 124 L403 155 L369 155 Z" fill="url(#txs)" opacity="0.8"/>
<ellipse cx="385" cy="92" rx="27" ry="6" fill="url(#ci)" stroke="#d8d8d8"/>
<path d="M454 160 L464 160 L460 125 Z" fill="#7a6d5c" opacity="0.45"/>
<path d="M410 90 L460 90 L454 160 L416 160 Z" fill="url(#cb)"/>
<path d="M418 122 L454 122 L452 153 L420 153 Z" fill="url(#txs)" opacity="0.8"/>
<ellipse cx="435" cy="90" rx="25" ry="6" fill="url(#ci)" stroke="#d8d8d8"/>
<path d="M58 225 L73 225 L67 165 Z" fill="#7a6d5c" opacity="0.45"/>
<path d="M-1 105 L67 105 L58 225 L8 225 Z" fill="url(#cb)"/>
<path d="M10 153 L60 153 L56 215 L13 215 Z" fill="url(#txs)" opacity="0.8"/>
<ellipse cx="33" cy="105" rx="34" ry="7" fill="url(#ci)" stroke="#d8d8d8"/>
<path d="M151 225 L170 225 L162 165 Z" fill="#7a6d5c" opacity="0.45"/>
<path d="M78 105 L162 105 L151 225 L89 225 Z" fill="url(#cb)"/>
<path d="M91 153 L153 153 L148 215 L96 215 Z" fill="url(#txs)" opacity="0.8"/>
<ellipse cx="120" cy="105" rx="42" ry="9" fill="url(#ci)" stroke="#d8d8d8"/>
<path d="M254 222 L272 222 L265 162 Z" fill="#7a6d5c" opacity="0.45"/>
<path d="M183 102 L265 102 L254 222 L194 222 Z" fill="url(#cb)"/>
<path d="M196 150 L256 150 L251 212 L200 212 Z" fill="url(#txs)" opacity="0.8"/>
<ellipse cx="224" cy="102" rx="41" ry="9" fill="url(#ci)" stroke="#d8d8d8"/>
<path d="M391 219 L410 219 L402 159 Z" fill="#7a6d5c" opacity="0.45"/>
<path d="M314 99 L402 99 L391 219 L325 219 Z" fill="url(#cb)"/>
<path d="M328 147 L393 147 L387 209 L333 209 Z" fill="url(#txs)" opacity="0.8"/>
<ellipse cx="358" cy="99" rx="44" ry="10" fill="url(#ci)" stroke="#d8d8d8"/>
<path d="M453 218 L462 218 L458 158 Z" fill="#7a6d5c" opacity="0.45"/>
<path d="M418 98 L458 98 L453 218 L423 218 Z" fill="url(#cb)"/>
<path d="M424 146 L454 146 L451 208 L426 208 Z" fill="url(#txs)" opacity="0.8"/>
<ellipse cx="438" cy="98" rx="20" ry="4" fill="url(#ci)" stroke="#d8d8d8"/>
<path d="M26 300 L38 300 L33 210 Z" fill="#7a6d5c" opacity="0.45"/>
<path d="M-17 121 L33 121 L26 300 L-10 300 Z" fill="url(#cb)"/>
<path d="M-10 175 L28 175 L25 291 L-6 291 Z" fill="url(#txs)" opacity="0.8"/>
<ellipse cx="8" cy="121" rx="25" ry="6" fill="url(#ci)" stroke="#d8d8d8"/>
<path d="M135 300 L159 300 L149 216 Z" fill="#7a6d5c" opacity="0.45"/>
<path d="M39 131 L149 131 L135 300 L53 300 Z" fill="url(#cb)"/>
<path d="M55 182 L139 182 L130 292 L63 292 Z" fill="url(#tx)" opacity="0.8"/>
<ellipse cx="94" cy="131" rx="55" ry="12" fill="url(#ci)" stroke="#d8d8d8"/>
<path d="M283 300 L307 300 L298 215 Z" fill="#7a6d5c" opacity="0.45"/>
<path d="M186 130 L298 130 L283 300 L201 300 Z" fill="url(#cb)"/>
<path d="M203 181 L287 181 L279 292 L210 292 Z" fill="url(#tx)" opacity="0.8"/>
<ellipse cx="242" cy="130" rx="56" ry="12" fill="url(#ci)" stroke="#d8d8d8"/>
<path d="M424 300 L450 300 L440 214 Z" fill="#7a6d5c" opacity="0.45"/>
<path d="M320 128 L440 128 L424 300 L336 300 Z" fill="url(#cb)"/>
<path d="M338 180 L428 180 L419 291 L346 291 Z" fill="url(#tx)" opacity="0.8"/>
<ellipse cx="380" cy="128" rx="60" ry="13" fill="url(#ci)" stroke="#d8d8d8"/>
</svg></div>
<div class="t cap" style="left:711px;top:1455.5px;">Åbäke</div>
<div class="t cap" style="left:711.5px;top:1487.7px;font-size:24.8px;">Connaissez-vous la blague du petit-</div>
<div class="t cap" style="left:711px;top:1519.0px;">déjeuner ?</div>
<!-- list -->
<div class="hl" style="top:1622px"></div>
<div class="t list" style="left:714px;top:1636.6px;">ABAZEDATOME</div>
<div class="hl" style="top:1678px"></div>
<div class="t list" style="left:714px;top:1692.7px;">ACCONCI Vito</div>
<div class="hl" style="top:1736px"></div>
<div class="t list" style="left:714px;top:1750.6px;">ANTILLE Emmanuelle</div>
<div class="hl" style="top:1794px"></div>
<div class="t list" style="left:714px;top:1807.2px;">ARDOUVIN Pierre</div>
<div class="hl" style="top:1850px"></div>
<div id="last" style="position:absolute;left:112px;top:1853px;width:2426px;height:43px;overflow:hidden;border-radius:0 0 21px 21px;"><div class="t list" style="left:602px;top:11.4px;">AUTOGENA Lise</div></div>
<div style="position:absolute;left:112px;top:76px;width:2426px;height:1820px;border-radius:21px;box-shadow:inset 0 1px 0 rgba(255,255,255,0.6), inset 1px 0 0 rgba(255,255,255,0.4), inset -1px 0 0 rgba(255,255,255,0.4);pointer-events:none;"></div>
</body></html>
